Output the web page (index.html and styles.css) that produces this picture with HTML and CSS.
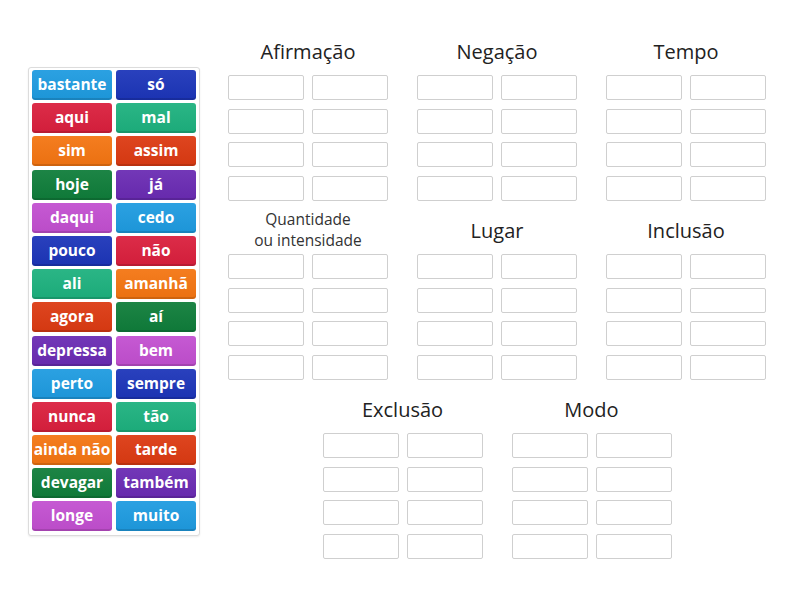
FILE: index.html
```html
<!DOCTYPE html>
<html>
  <head>
    <title>Advérbios - Agrupar</title>
    <meta name="viewport" content="width=device-width, initial-scale=1.0" />
    <link rel="stylesheet" href="styles.css">
  </head>
  <body>
    <div class="page">
      <!-- word bank -->
      <div class="bank">
        <div class="tile c1">bastante</div>
        <div class="tile c2">só</div>
        <div class="tile c3">aqui</div>
        <div class="tile c4">mal</div>
        <div class="tile c5">sim</div>
        <div class="tile c6">assim</div>
        <div class="tile c7">hoje</div>
        <div class="tile c8">já</div>
        <div class="tile c9">daqui</div>
        <div class="tile c1">cedo</div>
        <div class="tile c2">pouco</div>
        <div class="tile c3">não</div>
        <div class="tile c4">ali</div>
        <div class="tile c5">amanhã</div>
        <div class="tile c6">agora</div>
        <div class="tile c7">aí</div>
        <div class="tile c8">depressa</div>
        <div class="tile c9">bem</div>
        <div class="tile c1">perto</div>
        <div class="tile c2">sempre</div>
        <div class="tile c3">nunca</div>
        <div class="tile c4">tão</div>
        <div class="tile c5">ainda não</div>
        <div class="tile c6">tarde</div>
        <div class="tile c7">devagar</div>
        <div class="tile c8">também</div>
        <div class="tile c9">longe</div>
        <div class="tile c1">muito</div>
      </div>

      <!-- groups -->
      <div class="board">
        <div class="group">
          <div class="group-title">Afirmação</div>
          <div class="slots"><div></div><div></div><div></div><div></div><div></div><div></div><div></div><div></div></div>
        </div>
        <div class="group">
          <div class="group-title">Negação</div>
          <div class="slots"><div></div><div></div><div></div><div></div><div></div><div></div><div></div><div></div></div>
        </div>
        <div class="group">
          <div class="group-title">Tempo</div>
          <div class="slots"><div></div><div></div><div></div><div></div><div></div><div></div><div></div><div></div></div>
        </div>
        <div class="group">
          <div class="group-title small"><span>Quantidade</span><span>ou intensidade</span></div>
          <div class="slots"><div></div><div></div><div></div><div></div><div></div><div></div><div></div><div></div></div>
        </div>
        <div class="group">
          <div class="group-title">Lugar</div>
          <div class="slots"><div></div><div></div><div></div><div></div><div></div><div></div><div></div><div></div></div>
        </div>
        <div class="group">
          <div class="group-title">Inclusão</div>
          <div class="slots"><div></div><div></div><div></div><div></div><div></div><div></div><div></div><div></div></div>
        </div>
        <div class="group">
          <div class="group-title">Exclusão</div>
          <div class="slots"><div></div><div></div><div></div><div></div><div></div><div></div><div></div><div></div></div>
        </div>
        <div class="group">
          <div class="group-title">Modo</div>
          <div class="slots"><div></div><div></div><div></div><div></div><div></div><div></div><div></div><div></div></div>
        </div>
      </div>
    </div>
  </body>
</html>
```

FILE: styles.css
```css
body {
  margin: 0;
  padding: 0;
  background-color: #fff;
  font-family: "Open Sans", "Liberation Sans", sans-serif;
  color: #222;
}

.page {
  display: flex;
  align-items: flex-start;
  padding-left: 28px;
}

/* word bank on the left */
.bank {
  margin-top: 67px;
  display: grid;
  grid-template-columns: 80px 80px;
  column-gap: 4px;
  row-gap: 3.2px;
  padding: 2px 3px 4px 3px;
  border: 1px solid #dcdcdc;
  border-radius: 3px;
  background-color: #fff;
  box-shadow: 0 1px 2px rgba(0, 0, 0, 0.08);
}

.tile {
  height: 30px;
  line-height: 28px;
  text-align: center;
  color: #fff;
  font-weight: bold;
  font-size: 15.5px;
  border-radius: 3px;
  white-space: nowrap;
  box-shadow: inset 0 -2px 0 rgba(0, 0, 0, 0.12);
  background-image: linear-gradient(rgba(255, 255, 255, 0.06), rgba(0, 0, 0, 0.04));
}

.c1 { background-color: #1e9be0; }
.c2 { background-color: #1c35b9; }
.c3 { background-color: #da1f3d; }
.c4 { background-color: #1db17e; }
.c5 { background-color: #f47512; }
.c6 { background-color: #dc3a12; }
.c7 { background-color: #0f7d3a; }
.c8 { background-color: #6a2bb3; }
.c9 { background-color: #c24fd0; }

/* groups on the right */
.board {
  margin-left: 28px;
  margin-top: 31px;
  width: 538px;
  display: flex;
  flex-wrap: wrap;
  justify-content: center;
  column-gap: 29px;
  row-gap: 9.5px;
}

.group {
  width: 160px;
}

.group-title {
  height: 40px;
  margin-bottom: 4px;
  display: flex;
  flex-direction: column;
  align-items: center;
  justify-content: center;
  text-align: center;
  font-size: 20px;
}

.group-title.small {
  font-size: 15.5px;
  line-height: 21px;
  color: #333;
}

.slots {
  display: grid;
  grid-template-columns: 76px 76px;
  column-gap: 8px;
  row-gap: 8.5px;
}

.slots div {
  box-sizing: border-box;
  height: 25px;
  border: 1px solid #cfcfcf;
  border-radius: 2px;
  background-color: #fff;
}
```
